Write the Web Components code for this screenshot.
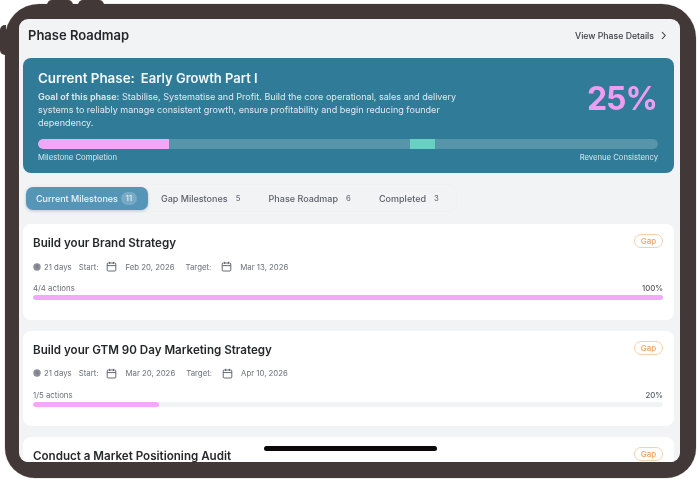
<!DOCTYPE html>
<html lang="en"><head><meta charset="utf-8"><title>Phase Roadmap</title>
<style>
html,body{margin:0;height:480px;overflow:hidden;background:#fff;font-family:Inter,"Liberation Sans",sans-serif}
body{padding:4px 4px 2px 5px;box-sizing:border-box}
</style></head><body>
<device-frame>
  <roadmap-header></roadmap-header>
  <phase-banner></phase-banner>
  <tab-bar>
    <tab-item count="11" active>Current Milestones</tab-item>
    <tab-item count="5">Gap Milestones</tab-item>
    <tab-item count="6">Phase Roadmap</tab-item>
    <tab-item count="3">Completed</tab-item>
  </tab-bar>
  <milestone-card title="Build your Brand Strategy" start="Feb 20, 2026" target="Mar 13, 2026" actions="4/4 actions" pct="100"></milestone-card>
  <milestone-card title="Build your GTM 90 Day Marketing Strategy" start="Mar 20, 2026" target="Apr 10, 2026" actions="1/5 actions" pct="20"></milestone-card>
  <milestone-card title="Conduct a Market Positioning Audit"></milestone-card>
</device-frame>
<script>
const def=(name,html)=>customElements.define(name,class extends HTMLElement{
  connectedCallback(){ if(this.shadowRoot)return; const r=this.attachShadow({mode:'open'}); r.innerHTML=typeof html==='function'?html(this):html; }
});
def('device-frame',`<style>
:host{display:block;position:relative;width:691px;height:474px;box-sizing:border-box;padding:15px 16px 16px 14px;background:#433838;border-radius:34px 34px 30px 30px;box-shadow:0 0 0 .5px #d9d9d9}
.screen{height:100%;overflow:hidden;background:#f2f3f5;border-radius:9px;box-sizing:border-box;padding:0 6px 0 4px;display:flex;flex-direction:column;filter:blur(.35px)}
.btn{position:absolute;background:#433838}
.t1{left:42px;top:-4px;width:26px;height:5px;border-radius:6px 6px 0 0}
.t2{left:73px;top:-4px;width:26px;height:5px;border-radius:6px 6px 0 0}
.s{left:-5px;top:21px;width:6px;height:30px;border-radius:5px 0 0 5px}
.home{position:absolute;left:259px;top:442px;width:173px;height:5px;border-radius:3px;background:#0a0808}
</style><span class="btn t1"></span><span class="btn t2"></span><span class="btn s"></span>
<div class="screen"><slot></slot></div><span class="home"></span>`);
def('roadmap-header',`<style>
:host{display:flex;flex:none;justify-content:space-between;align-items:center;height:39px;padding:0 7px 6px 5px;box-sizing:border-box;color:#26272b}
h1{margin:0;font-size:13px;font-weight:600;line-height:1}
a{display:flex;align-items:center;gap:6px;font-size:8.7px;font-weight:500;color:#3a3d44}
svg{width:7px;height:9px}
</style><h1>Phase Roadmap</h1><a>View Phase Details<svg viewBox="0 0 7 9" fill="none" stroke="#3a3d44" stroke-width="1.1"><path d="M2 1l3.2 3.5L2 8"/></svg></a>`);
def('phase-banner',`<style>
:host{display:block;flex:none;height:115px;box-sizing:border-box;padding:12px 16px 0 15px;background:#307b98;border-radius:8px;color:#fff}
.top{display:flex;justify-content:space-between}
h2{margin:0 0 3px;display:flex;gap:6px;font-size:13.4px;line-height:17px;font-weight:600;color:#f4f8fa}
h2 span+span{font-size:13px}
p{margin:0;width:430px;font-size:9.05px;line-height:13px;color:#dfeaef}
b{font-weight:600}
.pct{font-size:32px;font-weight:700;line-height:36px;color:#ee9df2;margin:11px 1px 0 0;letter-spacing:-1px}
.bar{position:relative;height:10px;margin-top:10px;border-radius:5px;background:#5796aa;overflow:hidden}
.fill{position:absolute;left:0;top:0;bottom:0;width:131px;background:#f2a6f8;border-radius:5px 0 0 5px}
.mark{position:absolute;left:372px;top:0;bottom:0;width:25px;background:#68d1c1}
.labels{display:flex;justify-content:space-between;font-size:7.7px;line-height:10px;margin-top:4px;color:#d9e7ec}
</style><div class="top"><div><h2><span>Current Phase:</span><span>Early Growth Part I</span></h2>
<p><b>Goal of this phase:</b> Stabilise, Systematise and Profit. Build the core operational, sales and delivery systems to reliably manage consistent growth, ensure profitability and begin reducing founder dependency.</p></div>
<div class="pct">25%</div></div>
<div class="bar"><span class="fill"></span><span class="mark"></span></div>
<div class="labels"><span>Milestone Completion</span><span>Revenue Consistency</span></div>`);
def('tab-bar',`<style>
:host{display:flex;flex:none;width:432px;height:28px;box-sizing:border-box;align-items:center;margin:11px 0 12px 2px;border-radius:8px;border:1px solid #eef0f2;background:#f2f3f5}
</style><slot></slot>`);
def('tab-item',el=>`<style>
:host{display:flex;align-items:center;height:23px;box-sizing:border-box;padding:0 15px 0 13px;gap:8px;font-size:9px;font-weight:500;color:#5a5f69;border-radius:7px;white-space:nowrap}
:host([active]){background:#5596b8;color:#eaf3f7;padding:0 11px 0 10px;gap:3px;box-shadow:0 1px 3px rgba(60,110,140,.3)}
.c{font-size:7.6px;color:#6b7078;min-width:5px;text-align:center}
:host([active]) .c{color:#eaf3f7;background:#78aac5;border-radius:7px;width:16px;height:13px;line-height:13px}
</style><slot></slot><span class="c">${el.getAttribute('count')}</span>`);
def('milestone-card',el=>{
const full=el.hasAttribute('start');const p=+el.getAttribute('pct');
const cal=`<svg class="cal" viewBox="0 0 11 11" fill="none" stroke="#555a63" stroke-width=".9"><rect x="1.2" y="2" width="8.6" height="8" rx="1"/><path d="M1.2 4.6h8.6M3.6.8v2.2M7.4.8v2.2"/></svg>`;
return `<style>
:host{display:block;flex:none;height:95.5px;box-sizing:border-box;padding:11px 11px 0 10px;margin-bottom:11px;background:#fff;border-radius:8px}
.head{display:flex;justify-content:space-between;align-items:flex-start}
h3{margin:0;font-size:11.6px;line-height:17px;font-weight:600;color:#27282c}
.gap{font-size:8px;font-weight:500;line-height:12px;width:29px;box-sizing:border-box;text-align:center;border:1px solid #f8cfab;border-radius:7px;color:#f3a062;height:14px;margin-top:-1px}
.meta{display:flex;align-items:center;font-size:7.8px;color:#6a6f78;height:11px;margin-top:9px}
.clock{width:8px;height:8px;margin-right:3px}
.cal{width:11px;height:11px;margin:0 8px 0 8px}
.tt{margin-left:11px}.tt+.cal{margin-left:10px}
.row{display:flex;justify-content:space-between;font-size:7.8px;line-height:10px;color:#6a6f78;margin-top:11px}
.row b{font-weight:500;color:#55585f}
.bar{height:5px;margin-top:2px;border-radius:3px;background:#f2f3f5;overflow:hidden}
.bar i{display:block;height:100%;background:#f3a8fa;border-radius:3px;width:${p}%}
</style><div class="head"><h3>${el.getAttribute('title')}</h3><span class="gap">Gap</span></div>
${full?`<div class="meta"><svg class="clock" viewBox="0 0 8 8"><circle cx="4" cy="4" r="3.7" fill="#8a8f97"/><path d="M4 2v2.2l1.4.8" fill="none" stroke="#5f646c" stroke-width=".7"/></svg>21 days<span style="margin-left:7px">Start:</span>${cal}${el.getAttribute('start')}<span class="tt">Target:</span>${cal}${el.getAttribute('target')}</div>
<div class="row"><span>${el.getAttribute('actions')}</span><b>${p}%</b></div>
<div class="bar"><i></i></div>`:''}`});
</script>
</body></html>
